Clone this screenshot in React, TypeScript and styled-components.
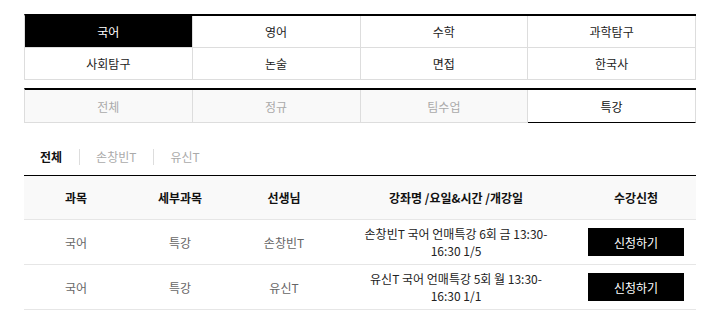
import React from "react";
import styled, { createGlobalStyle } from "styled-components";

const GlobalStyle = createGlobalStyle`
  html, body { margin: 0; padding: 0; background: #fff; }
  body {
    font-family: "Noto Sans CJK KR", "Noto Sans", sans-serif;
    font-size: 12px;
    color: #222;
  }
  * { box-sizing: border-box; }
`;

const Page = styled.div`
  width: 672px;
  margin: 14px 0 0 24px;
`;

const SubjectGrid = styled.div`
  display: grid;
  grid-template-columns: repeat(4, 1fr);
  border-top: 2px solid #000;
  border-left: 1px solid #ddd;
`;

const SubjectCell = styled.div<{ $active?: boolean }>`
  height: 32px;
  display: flex;
  align-items: center;
  justify-content: center;
  border-right: 1px solid #ddd;
  border-bottom: 1px solid #ddd;
  background: ${(p) => (p.$active ? "#000" : "#fff")};
  color: ${(p) => (p.$active ? "#fff" : "#222")};
  font-size: 12px;
`;

const TypeTabs = styled.div`
  margin-top: 8px;
  display: grid;
  grid-template-columns: repeat(4, 1fr);
  border-top: 2px solid #000;
  border-left: 1px solid #ddd;
`;

const TypeTab = styled.div<{ $active?: boolean }>`
  height: 33px;
  display: flex;
  align-items: center;
  justify-content: center;
  border-right: 1px solid #ddd;
  border-bottom: 1px solid ${(p) => (p.$active ? "#000" : "#ddd")};
  background: ${(p) => (p.$active ? "#fff" : "#f9f9f9")};
  color: ${(p) => (p.$active ? "#111" : "#aaa")};
  font-size: 12px;
`;

const TeacherTabs = styled.div`
  display: flex;
  align-items: center;
  margin: 26px 0 10px;
  padding-left: 16px;
`;

const TeacherTab = styled.div<{ $active?: boolean; $first?: boolean }>`
  height: 16px;
  line-height: 16px;
  padding: 0 17px;
  padding-left: ${(p) => (p.$first ? "0" : "16px")};
  border-left: ${(p) => (p.$first ? "none" : "1px solid #ddd")};
  color: ${(p) => (p.$active ? "#111" : "#aaa")};
  font-weight: ${(p) => (p.$active ? 700 : 400)};
  font-size: 12px;
`;

const Table = styled.table`
  width: 672px;
  border-collapse: collapse;
  table-layout: fixed;
  border-top: 1px solid #000;
`;

const Th = styled.th`
  height: 44px;
  background: #f9f9f9;
  border-bottom: 1px solid #e6e6e6;
  font-weight: 700;
  color: #111;
  font-size: 12px;
  text-align: center;
  padding: 0;
`;

const Td = styled.td<{ $dark?: boolean; $tight?: boolean }>`
  padding: ${(p) => (p.$tight ? "5px 0" : "5px 20px")};
  line-height: 17px;
  height: 45px;
  border-bottom: 1px solid #e6e6e6;
  text-align: center;
  color: ${(p) => (p.$dark ? "#222" : "#666")};
  font-size: 12px;
`;

const ApplyButton = styled.button`
  width: 96px;
  height: 28px;
  border: none;
  background: #000;
  color: #fff;
  font-family: inherit;
  font-size: 12px;
  cursor: pointer;
  display: block;
  margin: 0 auto;
  padding: 0;
`;

const subjects = ["국어", "영어", "수학", "과학탐구", "사회탐구", "논술", "면접", "한국사"];
const types = ["전체", "정규", "팀수업", "특강"];
const teachers = ["전체", "손창빈T", "유신T"];
const rows = [
  { subject: "국어", detail: "특강", teacher: "손창빈T", title: "손창빈T 국어 언매특강 6회 금 13:30-16:30 1/5" },
  { subject: "국어", detail: "특강", teacher: "유신T", title: "유신T 국어 언매특강 5회 월 13:30-16:30 1/1" },
];

export default function App() {
  return (
    <>
      <GlobalStyle />
      <Page>
        <SubjectGrid>
          {subjects.map((s, i) => (
            <SubjectCell key={s} $active={i === 0}>{s}</SubjectCell>
          ))}
        </SubjectGrid>
        <TypeTabs>
          {types.map((t, i) => (
            <TypeTab key={t} $active={i === 3}>{t}</TypeTab>
          ))}
        </TypeTabs>
        <TeacherTabs>
          {teachers.map((t, i) => (
            <TeacherTab key={t} $first={i === 0} $active={i === 0}>{t}</TeacherTab>
          ))}
        </TeacherTabs>
        <Table>
          <colgroup>
            <col style={{ width: 104 }} />
            <col style={{ width: 104 }} />
            <col style={{ width: 104 }} />
            <col style={{ width: 240 }} />
            <col style={{ width: 120 }} />
          </colgroup>
          <thead>
            <tr>
              <Th>과목</Th>
              <Th>세부과목</Th>
              <Th>선생님</Th>
              <Th>강좌명 /요일&amp;시간 /개강일</Th>
              <Th>수강신청</Th>
            </tr>
          </thead>
          <tbody>
            {rows.map((r) => (
              <tr key={r.title}>
                <Td>{r.subject}</Td>
                <Td>{r.detail}</Td>
                <Td>{r.teacher}</Td>
                <Td $dark>{r.title}</Td>
                <Td $tight><ApplyButton>신청하기</ApplyButton></Td>
              </tr>
            ))}
          </tbody>
        </Table>
      </Page>
    </>
  );
}
